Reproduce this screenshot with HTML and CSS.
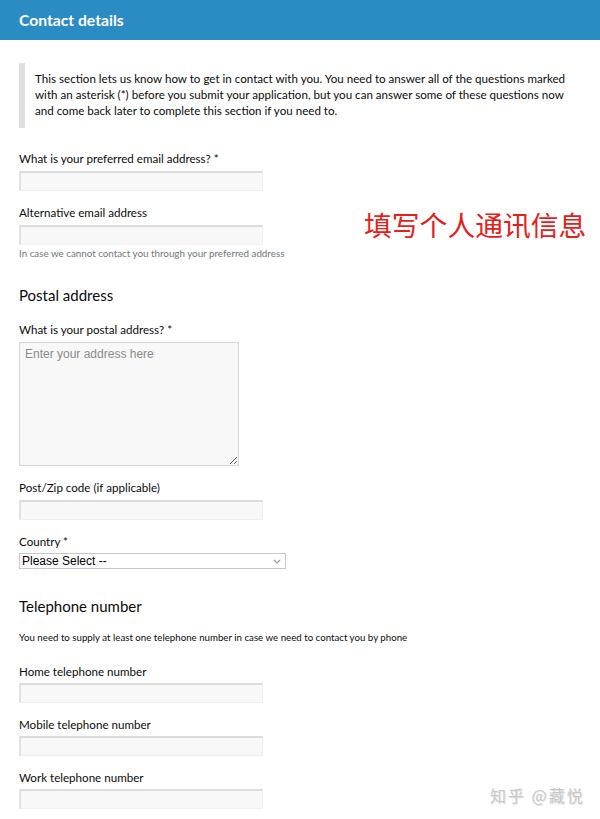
FILE: index.html
```html
<!DOCTYPE html>
<html lang="en">
<head>
<meta charset="utf-8">
<title>Contact details</title>
<link rel="stylesheet" href="styles.css">
</head>
<body>
<header class="topbar"><h1 class="topbar-title">Contact details</h1></header>
<main class="content">
  <div class="inset">This section lets us know how to get in contact with you. You need to answer all of the questions marked with an asterisk (*) before you submit your application, but you can answer some of these questions now and come back later to complete this section if you need to.</div>

  <div class="field f-first">
    <label class="label">What is your preferred email address? *</label>
    <input class="input" type="text">
  </div>
  <div class="field f-next">
    <label class="label">Alternative email address</label>
    <input class="input" type="text">
    <span class="hint">In case we cannot contact you through your preferred address</span>
  </div>

  <h2 class="heading h-postal">Postal address</h2>
  <div class="field f-after-heading">
    <label class="label">What is your postal address? *</label>
    <textarea class="textarea" placeholder="Enter your address here"></textarea>
  </div>
  <div class="field f-next">
    <label class="label">Post/Zip code (if applicable)</label>
    <input class="input" type="text">
  </div>
  <div class="field f-next">
    <label class="label">Country *</label>
    <div class="select-wrap">
      <select class="select"><option>Please Select --</option></select>
      <svg class="chevron" width="8" height="5" viewBox="0 0 8 5"><path d="M1 1 L4 4 L7 1" fill="none" stroke="#9a9a9a" stroke-width="1.2"/></svg>
    </div>
  </div>

  <h2 class="heading h-phone">Telephone number</h2>
  <p class="para">You need to supply at least one telephone number in case we need to contact you by phone</p>
  <div class="field tight f-after-para">
    <label class="label">Home telephone number</label>
    <input class="input" type="text">
  </div>
  <div class="field tight f-next">
    <label class="label">Mobile telephone number</label>
    <input class="input" type="text">
  </div>
  <div class="field tight f-next">
    <label class="label">Work telephone number</label>
    <input class="input" type="text">
  </div>
</main>
<div class="annotation">填写个人通讯信息</div>
<div class="watermark">知乎 @藏悦</div>
</body>
</html>
```

FILE: styles.css
```css
* { box-sizing: border-box; }
html, body { margin: 0; padding: 0; background: #fff; }
body {
  width: 600px;
  height: 819px;
  overflow: hidden;
  position: relative;
  font-family: Lato, "Noto Sans", sans-serif;
  color: #0b0c0c;
}
.topbar {
  height: 40px;
  background: #2b8cc4;
  display: flex;
  align-items: center;
  padding-left: 19px;
}
.topbar-title {
  margin: 0;
  font-size: 15.7px;
  font-weight: 700;
  color: #fff;
}
.content {
  padding: 0 19px;
  display: flex;
  flex-direction: column;
  align-items: flex-start;
}
.inset {
  margin-top: 23px;
  border-left: 6px solid #dee0e2;
  padding: 8px 10px 9px 10px;
  font-size: 11.6px;
  line-height: 16px;
  width: 562px;
}
.field {
  display: flex;
  flex-direction: column;
  align-items: flex-start;
  gap: 4px;
}
.field.tight { gap: 3px; }
.f-first { margin-top: 23px; }
.f-next { margin-top: 14px; }
.f-after-heading { margin-top: 17px; }
.f-after-para { margin-top: 21px; }
.label {
  font-size: 11.6px;
  line-height: 16px;
}
.input {
  width: 244px;
  height: 20px;
  background: #f8f8f8;
  border: 1px solid #f0f0f0;
  border-top: 2px solid #dcdcdc;
  border-left: 2px solid #e2e2e2;
  margin: 0;
  padding: 0 4px;
  font: inherit;
}
.hint {
  font-size: 9.8px;
  line-height: 12px;
  color: #6f777b;
  margin-top: -2px;
}
.textarea {
  width: 220px;
  height: 124px;
  background: #f8f8f8;
  border: 1px solid #d6d6d6;
  margin: 0;
  padding: 4px 5px;
  font-family: "Liberation Sans", Arial, sans-serif;
  font-size: 12px;
  resize: vertical;
}
.textarea::placeholder { color: #8a8a8a; }
.select-wrap {
  position: relative;
  margin-top: -1px;
}
.select {
  display: block;
  width: 267px;
  height: 16px;
  margin: 0;
  padding: 0 0 0 2px;
  border: 1px solid #c8c8c8;
  border-radius: 0;
  background: #fff;
  -webkit-appearance: none;
  appearance: none;
  font-family: "Liberation Sans", Arial, sans-serif;
  font-size: 12px;
  line-height: 14px;
  color: #000;
}
.chevron {
  position: absolute;
  right: 5px;
  top: 6px;
}
.heading {
  margin: 0;
  font-size: 15px;
  font-weight: 400;
  line-height: 20px;
}
.h-postal { margin-top: 26px; }
.h-phone { margin-top: 27px; }
.para {
  margin: 15px 0 0;
  font-size: 9.7px;
  line-height: 12px;
}
.annotation {
  position: absolute;
  left: 364px;
  top: 206px;
  font-family: "Noto Sans CJK SC", sans-serif;
  font-size: 27.8px;
  line-height: 36px;
  color: #e4201b;
}
.watermark {
  position: absolute;
  left: 490px;
  top: 783px;
  font-family: "Noto Sans CJK SC", sans-serif;
  font-size: 16px;
  line-height: 24px;
  letter-spacing: 2px;
  color: #c8c8c8;
  text-shadow: 1px 1px 0 #e8e8e8;
}
```
